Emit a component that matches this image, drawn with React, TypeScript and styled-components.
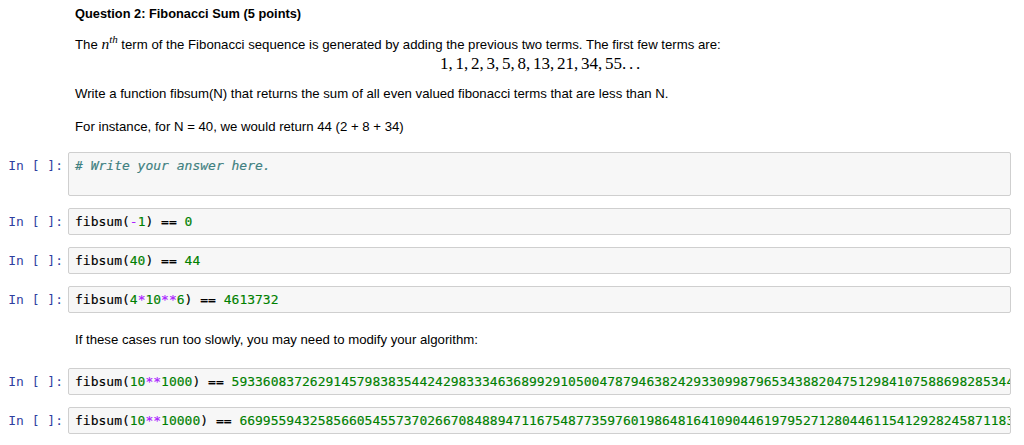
import React from "react";
import styled, { createGlobalStyle } from "styled-components";

const GlobalStyle = createGlobalStyle`
  html, body {
    margin: 0;
    padding: 0;
    background: #ffffff;
  }
  body {
    font-family: "Liberation Sans", Arial, sans-serif;
    color: #000000;
  }
`;

const Notebook = styled.div`
  width: 1024px;
  padding-right: 13px;
  box-sizing: border-box;
  display: flex;
  flex-direction: column;
`;

const MarkdownCell = styled.div<{ $mt?: number }>`
  margin-top: ${(p) => p.$mt ?? 0}px;
  padding-left: 75px;
  padding-right: 6px;
  font-family: "Liberation Sans", Arial, sans-serif;
  font-size: 13.2px;
  color: #000000;
`;

const Heading = styled.h4`
  margin: 0;
  padding-top: 4px;
  font-size: 12.8px;
  font-weight: bold;
  line-height: 20px;
`;

const Para = styled.p<{ $mt?: number }>`
  margin: ${(p) => p.$mt ?? 0}px 0 0 0;
  line-height: 20px;
`;

const MathVar = styled.span`
  font-family: "Liberation Serif", "Times New Roman", serif;
  font-style: italic;
  font-size: 15.5px;
`;

const Sup = styled.sup`
  font-family: "Liberation Serif", "Times New Roman", serif;
  font-style: italic;
  font-size: 11px;
  vertical-align: 6px;
  line-height: 0;
`;

const MathDisplay = styled.div`
  text-align: center;
  font-family: "Liberation Serif", "Times New Roman", serif;
  font-size: 17px;
  line-height: 17px;
  word-spacing: -1.5px;
`;

const CodeCell = styled.div<{ $mt?: number }>`
  margin-top: ${(p) => p.$mt ?? 12}px;
  display: flex;
  flex-direction: row;
  align-items: flex-start;
`;

const Prompt = styled.div`
  flex: 0 0 68px;
  box-sizing: border-box;
  padding: 5px 5px 0 0;
  text-align: right;
  font-family: "DejaVu Sans Mono", "Liberation Mono", monospace;
  font-size: 13px;
  line-height: 17px;
  color: #303f9f;
  white-space: pre;
`;

const InputArea = styled.div<{ $lines?: number }>`
  flex: 1 1 auto;
  min-width: 0;
  box-sizing: border-box;
  height: ${(p) => (p.$lines ?? 1) * 17 + 10}px;
  padding: 4px 6px;
  border: 1px solid #cfcfcf;
  border-radius: 2px;
  background: #f7f7f7;
  overflow: hidden;
`;

const CodeLine = styled.div`
  font-family: "DejaVu Sans Mono", "Liberation Mono", monospace;
  font-size: 13px;
  line-height: 17px;
  color: #000000;
  white-space: pre;
  -webkit-text-stroke: 0.15px currentColor;
`;

const Num = styled.span`
  color: #008000;
`;

const Op = styled.span`
  color: #aa22ff;
`;

const Cmt = styled.span`
  color: #408080;
  font-style: italic;
`;

const BIG1 =
  "5933608372629145798383544242983334636899291050047879463824293309987965343882047512984107588698285344";
const BIG2 =
  "6699559432585660545573702667084889471167548773597601986481641090446197952712804461154129282458711835";

const Cell: React.FC<{ lines?: number; mt?: number; children: React.ReactNode }> = ({
  lines,
  mt,
  children,
}) => (
  <CodeCell $mt={mt}>
    <Prompt>{"In [\u00a0]:"}</Prompt>
    <InputArea $lines={lines}>{children}</InputArea>
  </CodeCell>
);

export default function App() {
  return (
    <>
      <GlobalStyle />
      <Notebook>
        <MarkdownCell>
          <Heading>Question 2: Fibonacci Sum (5 points)</Heading>
          <Para $mt={10}>
            The <MathVar>n</MathVar>
            <Sup>th</Sup> term of the Fibonacci sequence is generated by adding the previous two
            terms. The first few terms are:
          </Para>
          <MathDisplay>1, 1, 2, 3, 5, 8, 13, 21, 34, 55. . .</MathDisplay>
          <Para $mt={12}>
            Write a function fibsum(N) that returns the sum of all even valued fibonacci terms
            that are less than N.
          </Para>
          <Para $mt={13}>For instance, for N = 40, we would return 44 (2 + 8 + 34)</Para>
        </MarkdownCell>

        <Cell lines={2} mt={15}>
          <CodeLine>
            <Cmt># Write your answer here.</Cmt>
          </CodeLine>
        </Cell>

        <Cell>
          <CodeLine>
            fibsum(<Op>-</Op>
            <Num>1</Num>) == <Num>0</Num>
          </CodeLine>
        </Cell>

        <Cell>
          <CodeLine>
            fibsum(<Num>40</Num>) == <Num>44</Num>
          </CodeLine>
        </Cell>

        <Cell>
          <CodeLine>
            fibsum(<Num>4</Num>
            <Op>*</Op>
            <Num>10</Num>
            <Op>**</Op>
            <Num>6</Num>) == <Num>4613732</Num>
          </CodeLine>
        </Cell>

        <MarkdownCell $mt={17}>
          <Para>If these cases run too slowly, you may need to modify your algorithm:</Para>
        </MarkdownCell>

        <Cell mt={18}>
          <CodeLine>
            fibsum(<Num>10</Num>
            <Op>**</Op>
            <Num>1000</Num>) == <Num>{BIG1}</Num>
          </CodeLine>
        </Cell>

        <Cell>
          <CodeLine>
            fibsum(<Num>10</Num>
            <Op>**</Op>
            <Num>10000</Num>) == <Num>{BIG2}</Num>
          </CodeLine>
        </Cell>
      </Notebook>
    </>
  );
}
